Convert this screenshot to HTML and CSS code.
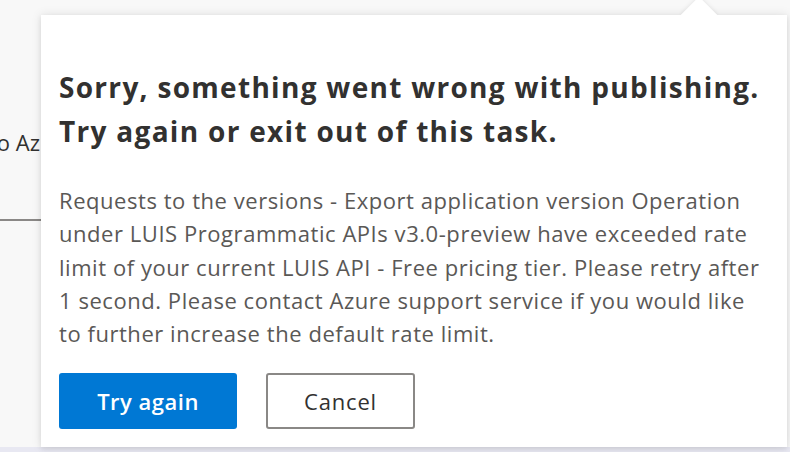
FILE: index.html
```html
<!DOCTYPE html>
<html lang="en">
<head>
<meta charset="utf-8">
<link rel="stylesheet" href="styles.css">
</head>
<body>
<div class="page">
  <div class="content">
    <div class="field">
      <div class="field-label">Publish to Azure</div>
      <div class="field-line"></div>
    </div>
  </div>
  <div class="statusbar"></div>

  <div class="callout" role="alertdialog">
    <div class="beak"></div>
    <div class="callout-inner">
      <h2 class="title">Sorry, something went wrong with publishing. Try again or exit out of this task.</h2>
      <p class="message">Requests to the versions - Export application version Operation under LUIS Programmatic APIs v3.0-preview have exceeded rate limit of your current LUIS API - Free pricing tier. Please retry after 1 second. Please contact Azure support service if you would like to further increase the default rate limit.</p>
      <div class="actions">
        <button class="btn btn-primary">Try again</button>
        <button class="btn btn-default">Cancel</button>
      </div>
    </div>
  </div>
</div>
</body>
</html>
```

FILE: styles.css
```css
* { box-sizing: border-box; }
html, body { margin: 0; padding: 0; }
body {
  width: 790px;
  height: 452px;
  overflow: hidden;
  font-family: "Open Sans", "Noto Sans", "Liberation Sans", sans-serif;
  color: #323130;
  background: #f8f8f8;
}
.page {
  position: relative;
  width: 790px;
  height: 452px;
  display: flex;
  flex-direction: column;
}
.content {
  flex: 1;
  background: #f8f8f8;
  padding-top: 126px;
}
.field-label {
  font-size: 22px;
  line-height: 32px;
  margin-left: -92px;
  white-space: nowrap;
  color: #323130;
}
.field-line {
  margin-top: 61px;
  height: 2px;
  width: 60px;
  background: #8a8886;
}
.statusbar {
  height: 5px;
  background: #e8e8f2;
}
.callout {
  position: absolute;
  left: 41px;
  top: 15px;
  width: 746px;
  height: 432px;
  background: #ffffff;
  box-shadow: 0 0 10px rgba(0,0,0,0.10), 0 2px 5px rgba(0,0,0,0.08);
}
.beak {
  position: absolute;
  left: 645px;
  top: -13px;
  width: 26px;
  height: 26px;
  background: #ffffff;
  transform: rotate(45deg);
  box-shadow: -1px -1px 4px rgba(0,0,0,0.07);
}
.callout-inner {
  position: relative;
  background: #ffffff;
  height: 100%;
  padding: 50px 18px 0 18px;
}
.title {
  margin: 0;
  font-size: 28px;
  line-height: 44px;
  font-weight: 700;
  letter-spacing: 1.3px;
  color: #323130;
}
.message {
  margin: 31px 0 0 0;
  font-size: 22px;
  line-height: 33.3px;
  letter-spacing: 0.55px;
  color: #5a5856;
}
.actions {
  display: flex;
  gap: 29px;
  margin-top: 23px;
}
.btn {
  height: 56px;
  border-radius: 3px;
  font-family: inherit;
  font-size: 22px;
  font-weight: 600;
  letter-spacing: 0.5px;
  padding: 0;
  cursor: pointer;
}
.btn-primary {
  width: 178px;
  background: #0078d4;
  color: #ffffff;
  border: 0;
}
.btn-default {
  width: 149px;
  background: #ffffff;
  color: #323130;
  border: 2px solid #8a8886;
  font-weight: 500;
  letter-spacing: 0.8px;
}
```
